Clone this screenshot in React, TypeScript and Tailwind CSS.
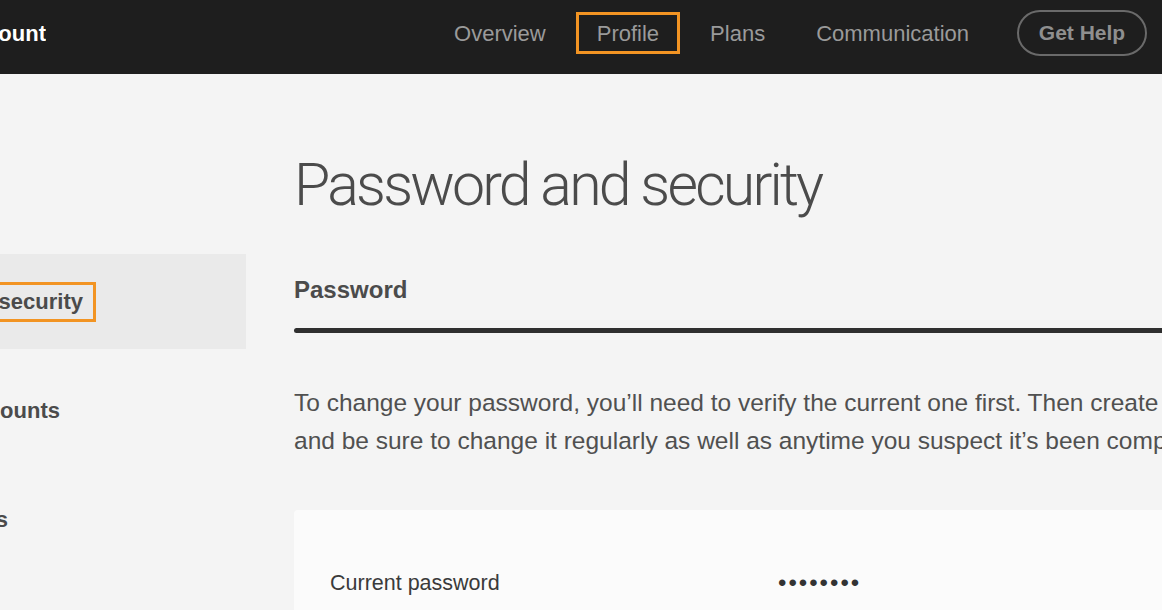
import { ReactNode } from 'react';

const font = { fontFamily: '"Liberation Sans", Arial, sans-serif' };

function NavItem({ children, active }: { children: ReactNode; active?: boolean }) {
  return (
    <a
      className={
        active
          ? 'h-[42px] px-[18px] flex items-center border-[3px] border-[#f29423] text-[22px] text-[#9a9a9a]'
          : 'h-[42px] px-[18px] flex items-center border-[3px] border-transparent text-[22px] text-[#9a9a9a]'
      }
    >
      {children}
    </a>
  );
}

function SideItem({ label, end, active }: { label: string; end: string; active?: boolean }) {
  return (
    <div className={active ? 'h-[95px] flex items-center bg-[#eaeaea]' : 'h-[95px] flex items-center'}>
      <div className={`${end} flex justify-end overflow-hidden`}>
        <span
          className={
            active
              ? 'whitespace-nowrap h-[40px] flex items-center pl-3 pr-[10px] border-[3px] border-[#f29423] text-[22px] font-bold text-[#4b4b4b]'
              : 'whitespace-nowrap text-[22px] font-bold text-[#4b4b4b]'
          }
        >
          {label}
        </span>
      </div>
    </div>
  );
}

export default function App() {
  return (
    <div className="w-[1162px] h-[610px] overflow-hidden bg-[#f4f4f4]" style={font}>
      <header className="h-[74px] pb-[8px] bg-[#1e1e1e] flex items-center">
        <div className="w-[46px] flex justify-end overflow-hidden">
          <span className="whitespace-nowrap text-[22px] font-bold text-white">Adobe Account</span>
        </div>
        <nav className="ml-auto flex items-center gap-[9px]">
          <NavItem>Overview</NavItem>
          <NavItem active>Profile</NavItem>
          <NavItem>Plans</NavItem>
          <NavItem>Communication</NavItem>
        </nav>
        <button className="ml-[27px] mr-[15px] h-[46px] w-[130px] rounded-full border-2 border-[#6a6a6a] text-[21px] font-bold text-[#8f8f8f]">
          Get Help
        </button>
      </header>

      <div className="flex">
        <aside className="w-[246px] shrink-0 pt-[180px] flex flex-col gap-[14px]">
          <SideItem label="Password and security" end="w-[96px]" active />
          <SideItem label="Connected accounts" end="w-[60px]" />
          <SideItem label="Privacy settings" end="w-[8px]" />
        </aside>

        <main className="ml-[48px] w-[1000px] shrink-0 pt-[80px]">
          <h1
            className="text-[59px] leading-[62px] font-light tracking-[-2.8px] text-[#4b4b4b]"
            style={{ fontFamily: 'Roboto, "Liberation Sans", sans-serif' }}
          >
            Password and security
          </h1>

          <h2 className="mt-[56px] text-[24px] font-bold text-[#4b4b4b]">Password</h2>
          <div className="mt-[20px] h-[5px] rounded-full bg-[#2f2f2f]" />

          <p className="mt-[51px] text-[24.5px] leading-[38px] text-[#505050]">
            <span className="block whitespace-nowrap">
              To change your password, you’ll need to verify the current one first. Then create a strong password
            </span>
            <span className="block whitespace-nowrap">
              and be sure to change it regularly as well as anytime you suspect it’s been compromised.
            </span>
          </p>

          <section className="mt-[50px] rounded-[4px] bg-[#fbfbfb] px-[36px] pt-[55px] pb-10">
            <div className="flex items-center">
              <span className="w-[448px] text-[21.5px] text-[#3a3a3a]">Current password</span>
              <span className="text-[24px] tracking-[2px] text-[#333]">••••••••</span>
            </div>
          </section>
        </main>
      </div>
    </div>
  );
}
